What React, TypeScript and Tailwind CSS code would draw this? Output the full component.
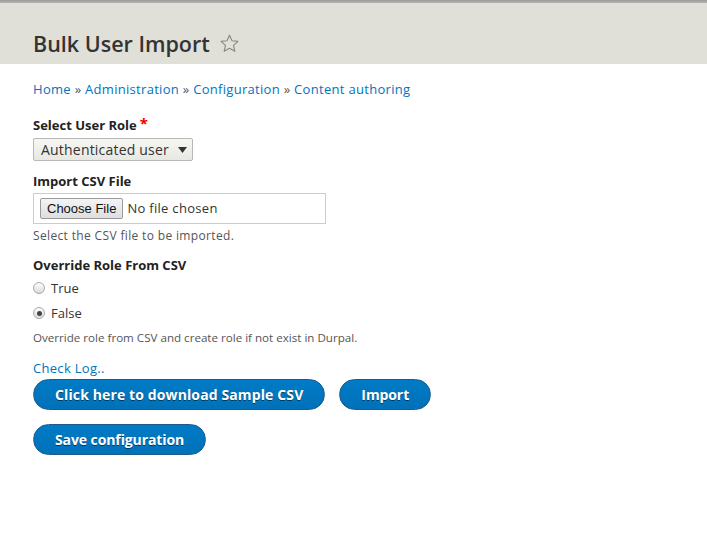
const font = { fontFamily: '"Open Sans", "Segoe UI", sans-serif' };

function Star() {
  return (
    <svg width="21" height="21" viewBox="0 0 24 24" className="ml-[9px]">
      <path
        d="M12 2.5l2.9 6.3 6.8.7-5.1 4.6 1.5 6.8L12 17.4l-6.1 3.5 1.5-6.8-5.1-4.6 6.8-.7z"
        fill="none"
        stroke="#8a8a80"
        strokeWidth="1.3"
        strokeLinejoin="round"
      />
    </svg>
  );
}

function Radio({ checked }: { checked?: boolean }) {
  return (
    <span className="inline-flex h-[12px] w-[12px] items-center justify-center rounded-full border border-[#a8a8a8] bg-gradient-to-b from-[#fdfdfd] to-[#dcdcdc]">
      {checked && <span className="h-[5px] w-[5px] rounded-full bg-[#444]" />}
    </span>
  );
}

function BlueButton({ children, wide }: { children: React.ReactNode; wide?: boolean }) {
  return (
    <button
      className={
        "h-[31px] rounded-full border border-[#1e5c90] bg-gradient-to-b from-[#007bc6] to-[#0071b8] px-[21px] text-[14px] font-bold text-white [text-shadow:0_1px_0_rgba(0,0,0,0.5)] " +
        (wide ? "tracking-[0.12px]" : "tracking-[-0.1px]")
      }
      style={font}
    >
      {children}
    </button>
  );
}

export default function App() {
  return (
    <div className="min-h-[537px] w-full bg-white text-[#333]" style={font}>
      {/* Header */}
      <div className="h-[3px] bg-gradient-to-b from-[#9a9a98] to-[#b4b4b0]" />
      <div className="flex h-[61px] items-end bg-[#e0e0d8] px-[33px] pb-[10px]">
        <h1 className="flex items-center text-[21.5px] font-semibold leading-none text-[#333]">
          Bulk User Import
          <Star />
        </h1>
      </div>

      <div className="px-[33px]">
        {/* Breadcrumb */}
        <div className="mt-[16px] text-[13px] leading-[18px] tracking-[0.3px] text-[#0074bd]">
          Home <span className="text-[#555]">»</span> Administration <span className="text-[#555]">»</span> Configuration{" "}
          <span className="text-[#555]">»</span> Content authoring
        </div>

        {/* Select role */}
        <div className="mt-[18px] flex items-start text-[13px] font-bold leading-[18px] text-[#222]">
          Select User Role<span className="ml-[3px] text-[15px] leading-none text-[#e00]">*</span>
        </div>
        <div className="mt-[4px] flex h-[23px] w-[160px] items-center justify-between rounded-[2px] border border-[#b8b8b8] bg-gradient-to-b from-[#f6f6f3] to-[#e8e8e3] pl-[7px] pr-[5px] text-[14px] leading-none tracking-[0.2px] text-[#333]">
          <span>Authenticated user</span>
          <svg width="9" height="6" viewBox="0 0 9 6">
            <path d="M0 0h9L4.5 6z" fill="#333" />
          </svg>
        </div>

        {/* Import CSV */}
        <div className="mt-[11px] text-[13px] font-bold leading-[18px] text-[#222]">Import CSV File</div>
        <div className="mt-[3px] flex h-[31px] w-[293px] items-center border border-[#ccc] bg-white pl-[6px]">
          <span
            className="flex h-[21px] items-center rounded-[2px] border border-[#9a9a9a] bg-gradient-to-b from-[#f4f4f4] to-[#dedede] px-[6px] text-[13px] text-[#111]"
            style={{ fontFamily: '"Liberation Sans", Arial, sans-serif' }}
          >
            Choose File
          </span>
          <span className="ml-[4px] text-[13px] tracking-[0.3px] text-[#333]">No file chosen</span>
        </div>
        <div className="mt-[4px] text-[12px] leading-[16px] tracking-[0.35px] text-[#555]">
          Select the CSV file to be imported.
        </div>

        {/* Override role */}
        <div className="mt-[12px] text-[13px] font-bold leading-[18px] text-[#222]">Override Role From CSV</div>
        <div className="mt-[5px] flex items-center gap-[6px] text-[13px] leading-[18px] text-[#333]">
          <Radio /> True
        </div>
        <div className="mt-[7px] flex items-center gap-[6px] text-[13px] leading-[18px] text-[#333]">
          <Radio checked /> False
        </div>
        <div className="mt-[8px] text-[11.6px] leading-[16px] text-[#555]">
          Override role from CSV and create role if not exist in Durpal.
        </div>

        {/* Actions */}
        <div className="mt-[13px] text-[13px] leading-[18px] tracking-[0.3px] text-[#0074bd]">Check Log..</div>
        <div className="mt-[2px] flex gap-[14px]">
          <BlueButton wide>Click here to download Sample CSV</BlueButton>
          <BlueButton>Import</BlueButton>
        </div>
        <div className="mt-[14px]">
          <BlueButton>Save configuration</BlueButton>
        </div>
      </div>
    </div>
  );
}
